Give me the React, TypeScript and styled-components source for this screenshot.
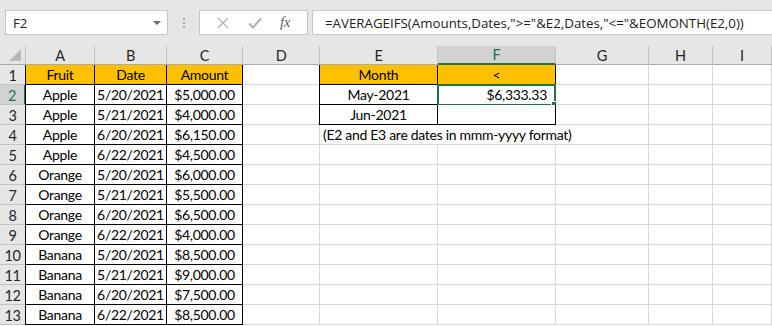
import React from 'react';
import styled, { createGlobalStyle } from 'styled-components';

const GlobalStyle = createGlobalStyle`
  html, body {
    margin: 0;
    padding: 0;
    background: #ffffff;
    overflow: hidden;
  }
`;

const Window = styled.div`
  width: 772px;
  height: 326px;
  overflow: hidden;
  background: #ffffff;
`;

const TopBar = styled.div`
  display: flex;
  align-items: center;
  height: 46px;
  padding: 10px 0 11px 5px;
  box-sizing: border-box;
  background: #e6e6e6;
`;

const Box = styled.div<{ $width?: number }>`
  display: flex;
  align-items: center;
  box-sizing: border-box;
  height: 25px;
  background: #ffffff;
  border: 1px solid #c6c6c6;
  width: ${(p) => (p.$width ? `${p.$width}px` : 'auto')};
  flex: ${(p) => (p.$width ? 'none' : '1')};
`;

const NameBox = styled(Box)`
  justify-content: space-between;
  padding: 0 6px 0 7px;
  font-family: 'Open Sans', 'Noto Sans', sans-serif;
  font-size: 13.3px;
  color: #222;
`;

const DropArrow = styled.span`
  width: 0;
  height: 0;
  border-left: 4px solid transparent;
  border-right: 4px solid transparent;
  border-top: 4px solid #6a6a6a;
`;

const Grip = styled.div`
  display: flex;
  flex-direction: column;
  gap: 2px;
  width: 31px;
  align-items: center;
  span {
    width: 2px;
    height: 2px;
    background: #a8a8a8;
  }
`;

const FxBox = styled(Box)`
  justify-content: space-around;
  padding: 0 8px;
  margin-right: 4px;
`;

const Fx = styled.span`
  font-family: 'Liberation Serif', serif;
  font-style: italic;
  font-size: 15px;
  color: #5f5f5f;
  letter-spacing: -0.5px;
`;

const Formula = styled(Box)`
  border-right: none;
  padding-left: 12px;
  font-family: 'Open Sans', 'Noto Sans', sans-serif;
  font-size: 13.3px;
  color: #222;
  white-space: nowrap;
`;

const Grid = styled.div`
  display: grid;
  grid-template-columns: 26px 69px 72px 76px 77px 118px 118px 93px 64px 1fr;
  grid-auto-rows: 20px;
  grid-template-rows: 19px;
  font-family: 'Lato', 'Open Sans', sans-serif;
  font-size: 14px;
  letter-spacing: -0.3px;
`;

const HeadCell = styled.div<{ $active?: boolean; $row?: boolean }>`
  box-sizing: border-box;
  display: flex;
  align-items: center;
  justify-content: center;
  font-size: 14.5px;
  background: ${(p) => (p.$active ? '#d2d2d2' : '#e6e6e6')};
  color: ${(p) => (p.$active ? '#217346' : '#262626')};
  border-right: ${(p) =>
    p.$row && p.$active ? '2px solid #217346' : p.$row ? '1px solid #ababab' : '1px solid #c3c3c3'};
  border-bottom: ${(p) =>
    !p.$row && p.$active ? '2px solid #217346' : p.$row ? '1px solid #c3c3c3' : '1px solid #ababab'};
  padding-top: ${(p) => (p.$row ? '1px' : '0')};
`;

const Corner = styled(HeadCell)`
  position: relative;
  &::after {
    content: '';
    position: absolute;
    right: 4px;
    bottom: 3px;
    width: 0;
    height: 0;
    border-left: 12px solid transparent;
    border-bottom: 12px solid #b9b9b9;
  }
`;

type Align = 'left' | 'center' | 'right';

const Cell = styled.div<{
  $align?: Align;
  $fill?: boolean;
  $boxed?: boolean;
  $edge?: boolean;
  $span?: number;
}>`
  position: relative;
  box-sizing: border-box;
  display: flex;
  align-items: flex-end;
  padding: 0 ${(p) => (p.$align === 'right' ? '8px' : '3px')} 1px 3px;
  white-space: nowrap;
  color: #000;
  justify-content: ${(p) =>
    p.$align === 'left' ? 'flex-start' : p.$align === 'right' ? 'flex-end' : 'center'};
  grid-column: span ${(p) => p.$span ?? 1};
  background: ${(p) => (p.$fill ? '#ffc000' : '#ffffff')};
  border-right: 1px solid ${(p) => (p.$boxed ? '#000' : '#d9d9d9')};
  border-bottom: 1px solid ${(p) => (p.$boxed ? '#000' : '#d9d9d9')};
  box-shadow: ${(p) => (p.$edge ? '-1px 0 0 #000' : 'none')};
`;

const Selection = styled.div`
  position: absolute;
  top: -1px;
  left: -1px;
  right: -1px;
  bottom: -2px;
  border: 2px solid #217346;
  pointer-events: none;
  &::after {
    content: '';
    position: absolute;
    right: -4px;
    bottom: -4px;
    width: 5px;
    height: 5px;
    background: #217346;
    border: 1px solid #ffffff;
  }
`;

const columns = ['A', 'B', 'C', 'D', 'E', 'F', 'G', 'H', 'I'];

const data: [string, string, string][] = [
  ['Apple', '5/20/2021', '$5,000.00'],
  ['Apple', '5/21/2021', '$4,000.00'],
  ['Apple', '6/20/2021', '$6,150.00'],
  ['Apple', '6/22/2021', '$4,500.00'],
  ['Orange', '5/20/2021', '$6,000.00'],
  ['Orange', '5/21/2021', '$5,500.00'],
  ['Orange', '6/20/2021', '$6,500.00'],
  ['Orange', '6/22/2021', '$4,000.00'],
  ['Banana', '5/20/2021', '$8,500.00'],
  ['Banana', '5/21/2021', '$9,000.00'],
  ['Banana', '6/20/2021', '$7,500.00'],
  ['Banana', '6/22/2021', '$8,500.00'],
];

const rightSide = (row: number) => {
  if (row === 1)
    return (
      <>
        <Cell $fill $boxed $edge>Month</Cell>
        <Cell $fill $boxed>&lt;</Cell>
        <Cell />
        <Cell />
        <Cell />
      </>
    );
  if (row === 2)
    return (
      <>
        <Cell $boxed $edge>May-2021</Cell>
        <Cell $boxed $align="right">
          $6,333.33
          <Selection />
        </Cell>
        <Cell />
        <Cell />
        <Cell />
      </>
    );
  if (row === 3)
    return (
      <>
        <Cell $boxed $edge>Jun-2021</Cell>
        <Cell $boxed />
        <Cell />
        <Cell />
        <Cell />
      </>
    );
  if (row === 4)
    return (
      <>
        <Cell $align="left" $span={3}>(E2 and E3 are dates in mmm-yyyy format)</Cell>
        <Cell />
        <Cell />
      </>
    );
  return (
    <>
      <Cell />
      <Cell />
      <Cell />
      <Cell />
      <Cell />
    </>
  );
};

export default function App() {
  const rows: [string, string, string][] = [['Fruit', 'Date', 'Amount'], ...data];

  return (
    <Window>
      <GlobalStyle />
      <TopBar>
        <NameBox $width={163}>
          F2
          <DropArrow />
        </NameBox>
        <Grip>
          <span />
          <span />
          <span />
        </Grip>
        <FxBox $width={109}>
          <svg width="12" height="12" viewBox="0 0 12 12">
            <path d="M1 1L11 11M11 1L1 11" stroke="#b3b3b3" strokeWidth="1.4" fill="none" />
          </svg>
          <svg width="14" height="12" viewBox="0 0 14 12">
            <path d="M1 6.5L5 10.5L13 1.5" stroke="#b3b3b3" strokeWidth="2.2" fill="none" />
          </svg>
          <Fx>fx</Fx>
        </FxBox>
        <Formula>=AVERAGEIFS(Amounts,Dates,"&gt;="&amp;E2,Dates,"&lt;="&amp;EOMONTH(E2,0))</Formula>
      </TopBar>
      <Grid>
        <Corner />
        {columns.map((c) => (
          <HeadCell key={c} $active={c === 'F'}>
            {c}
          </HeadCell>
        ))}
        {rows.map((r, i) => (
          <React.Fragment key={i}>
            <HeadCell $row $active={i + 1 === 2}>
              {i + 1}
            </HeadCell>
            <Cell $boxed $edge $fill={i === 0}>{r[0]}</Cell>
            <Cell $boxed $fill={i === 0}>{r[1]}</Cell>
            <Cell $boxed $fill={i === 0}>{r[2]}</Cell>
            <Cell />
            {rightSide(i + 1)}
          </React.Fragment>
        ))}
      </Grid>
    </Window>
  );
}
